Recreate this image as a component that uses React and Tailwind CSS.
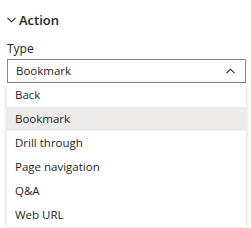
import React from 'react';

const items = ['Back', 'Bookmark', 'Drill through', 'Page navigation', 'Q&A', 'Web URL'];

const App = () => {
  const selected = 'Bookmark';

  return (
    <div className="w-[251px] h-[228px] bg-white text-[#252423] font-['Open_Sans',sans-serif] overflow-hidden">
      {/* Section header */}
      <div className="flex items-center h-[20px] mt-[10px] pl-[7px]">
        <svg width="9" height="6" viewBox="0 0 9 6" className="mr-[3px]">
          <path d="M0.5 0.8 L4.5 4.8 L8.5 0.8" fill="none" stroke="#252423" strokeWidth="1.1" />
        </svg>
        <span className="text-[13px] font-semibold leading-none">Action</span>
      </div>

      <div className="pl-[7px] pt-[11px] text-[12px] leading-[16px]">Type</div>

      <div className="relative mx-[7px] mt-[2px] w-[239px]">
        {/* Select box */}
        <div className="flex items-center justify-between h-[24px] border border-[#8a8886] pl-[8px] pr-[10px] text-[11.5px]">
          <span>{selected}</span>
          <svg width="9" height="6" viewBox="0 0 9 6">
            <path d="M0.5 5.2 L4.5 1.2 L8.5 5.2" fill="none" stroke="#252423" strokeWidth="1.1" />
          </svg>
        </div>

        {/* Options list */}
        <div className="absolute left-0 top-[24px] w-[239px] bg-white shadow-[0_1px_5px_rgba(0,0,0,0.18)] flex flex-col">
          {items.map((item) => (
            <div
              key={item}
              className={`h-[24px] flex items-center pl-[8px] text-[11.5px] ${
                item === selected ? 'bg-[#edebe9]' : ''
              }`}
            >
              {item}
            </div>
          ))}
        </div>
      </div>
    </div>
  );
};

export default App;
